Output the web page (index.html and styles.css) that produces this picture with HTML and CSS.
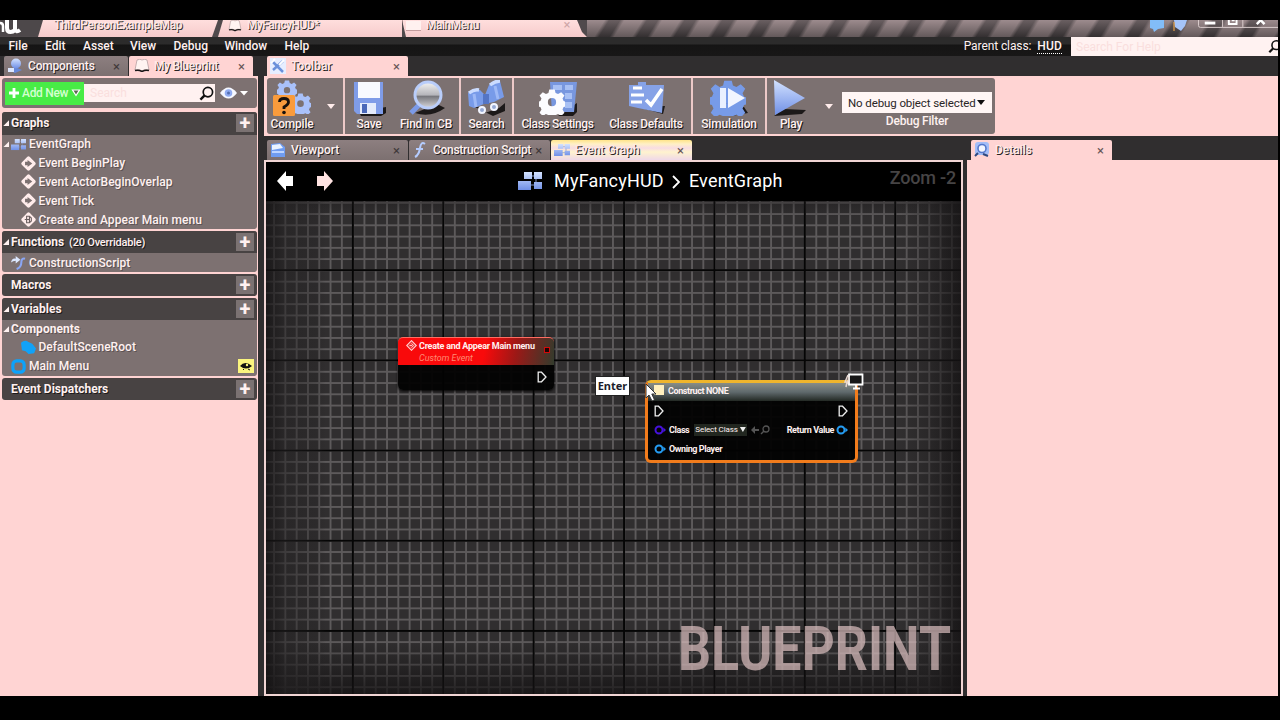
FILE: index.html
```html
<!DOCTYPE html>
<html lang="en">

<head>
  <meta charset="UTF-8" />
  <meta name="viewport" content="width=device-width, initial-scale=1.0" />
  <title>MyFancyHUD</title>
  <link rel="stylesheet" href="styles.css">
</head>

<body>
  <!-- shared icons -->
  <svg class="defs" width="0" height="0">
    <defs>
      <linearGradient id="blue" x1="0" y1="0" x2="0" y2="1">
        <stop offset="0" stop-color="#d3e2ff" />
        <stop offset="1" stop-color="#6f8fe6" />
      </linearGradient>
      <linearGradient id="glass" x1="0" y1="0" x2="0" y2="1">
        <stop offset="0" stop-color="#f4f4f4" />
        <stop offset=".5" stop-color="#b5b5ba" />
        <stop offset=".55" stop-color="#77777c" />
        <stop offset="1" stop-color="#d8d8dc" />
      </linearGradient>
      <symbol id="gear" viewBox="-12 -12 24 24">
        <path fill-rule="evenodd" d="M-2.5-11.5h5l.8 3.2 2.3 1 2.9-1.8 3 3-1.8 2.9 1 2.3 3.2.8v4l-3.2.8-1 2.3 1.8 2.9-3 3-2.9-1.8-2.3 1-.8 1.9h-5l-.8-1.9-2.3-1-2.9 1.8-3-3 1.8-2.9-1-2.3-3.2-.8v-4l3.2-.8 1-2.3-1.8-2.9 3-3 2.9 1.800 2.300-1zM0-3.600a3.800 3.800 0 1 0 0 7.600a3.800 3.800 0 1 0 0-7.600z" />
      </symbol>
      <symbol id="book" viewBox="0 0 16 14">
        <path d="M3 1q3-1.500 5 0q3-1.500 5 0l2 10q-4-1-6.500.5h-1Q5 10 1 11z" fill="#fff3f1" stroke="#a08c8e" stroke-width=".6" />
        <path d="M1 11.500q4-1 6.500.8h1q2.500-1.800 6.500-.8" fill="none" stroke="#191617" stroke-width="1.500" />
      </symbol>
      <symbol id="search" viewBox="0 0 16 16">
        <circle cx="9.500" cy="6.500" r="5" fill="none" stroke="#111" stroke-width="1.800" />
        <path d="M6 10L1.500 14.500" stroke="#111" stroke-width="2.600" />
      </symbol>
      <symbol id="event" viewBox="0 0 16 16">
        <path fill-rule="evenodd" fill="#ffeceb" d="M6.800.8Q8-.2 9.200.8l6 6q1 1.200 0 2.400l-6 6q-1.200 1-2.400 0l-6-6q-1-1.200 0-2.400zM7 4.200v2H4.300v3.600H7v2L12 8z" />
      </symbol>
      <symbol id="custom" viewBox="0 0 16 16">
        <path fill="#ffeceb" d="M6.800.8Q8-.2 9.200.8l6 6q1 1.200 0 2.400l-6 6q-1.200 1-2.400 0l-6-6q-1-1.200 0-2.400z" />
        <path d="M4 8h5M6 4.500h3l2 2v3l-2 2H6zM9 5v6" fill="none" stroke="#6b5f60" stroke-width="1.200" />
      </symbol>
      <symbol id="graph" viewBox="0 0 24 18">
        <path d="M12 4h6v9H9" fill="none" stroke="#7d8fc4" />
        <path fill="url(#blue)" d="M6 0h8v7H6zM16 0h8v7h-8zM0 9h13v9H0zM16 10h8v7h-8z" />
      </symbol>
      <symbol id="pin" viewBox="0 0 10 12">
        <path d="M1.200 1.200h3.300L9 6l-4.500 4.800H1.200z" fill="#050505" stroke="#eee" stroke-width="1.300" />
      </symbol>
      <symbol id="ring" viewBox="0 0 12 10">
        <circle cx="5" cy="5" r="3.500" fill="none" stroke="currentColor" stroke-width="2" />
        <path d="M9.300 2.500L12 5 9.300 7.500z" fill="currentColor" />
      </symbol>
    </defs>
  </svg>

  <div class="app">
    <header class="titlebar">
      <svg class="logo" viewBox="0 0 44 17">
        <path d="M0 0h44l-6 14q-2 2-5 2H0z" fill="#4d484a" />
        <path d="M0 3q3 0 3 3v6" fill="none" stroke="#fff" stroke-width="2.500" />
        <path d="M7 0v8q0 4 3.500 4 2.500 0 4.500-2M15 0v9q1 4 5 1" fill="none" stroke="#fff" stroke-width="4" />
      </svg>
      <div class="doc-tab first"><span>ThirdPersonExampleMap</span></div>
      <div class="doc-tab second"><svg class="doc-icon" viewBox="0 0 16 14"><use href="#book" /></svg><span>MyFancyHUD*</span></div>
      <div class="doc-tab third"><i class="sheet"></i><span>MainMenu</span><b class="close">×</b></div>
      <div class="stripes">
        <svg class="bubbles" viewBox="0 0 40 14">
          <path d="M1 0h14v8l-6 1-4 3-1-3-3-1z" fill="#82bdf8" />
          <path d="M25 0h13l-2 6-4 5-6-4z" fill="#a5c4fa" />
          <path d="M25 2v9" stroke="#ffb14b" />
        </svg>
        <svg class="window-buttons" viewBox="0 0 83 9">
          <path d="M.5-1v6.500q0 2 2 2H83M25.500-1v8M46.500-1v8" fill="none" stroke="#ddcfcf" />
          <path d="M7 3h11" stroke="#fff" stroke-width="3" />
          <path d="M32-2v6h8v-6M35 0h3" fill="none" stroke="#fff" stroke-width="2" />
          <path d="M61 4l4-4 4 4" fill="none" stroke="#fff" stroke-width="2.600" />
        </svg>
      </div>
    </header>

    <nav class="menubar">
      <span class="m-file">File</span><span class="m-edit">Edit</span><span class="m-asset">Asset</span><span class="m-view">View</span><span class="m-debug">Debug</span><span class="m-window">Window</span><span class="m-help">Help</span>
      <div class="parent-class">Parent class: <b>HUD</b></div>
      <div class="help-search"><span>Search For Help</span><svg viewBox="0 0 16 16"><use href="#search" /></svg></div>
    </nav>

    <div class="workspace">
      <aside class="sidebar">
        <div class="tabs">
          <div class="tab dim components-tab">
            <svg class="tab-icon" viewBox="0 0 16 16"><path d="M1 12l7-3 7 3-7 3z" fill="#6788d8" /><circle cx="9" cy="5.500" r="5" fill="url(#blue)" /><path d="M1 10h6v4H1z" fill="#dce7ff" /></svg>
            <span>Components</span><b class="close">×</b>
          </div>
          <div class="tab mybp-tab">
            <svg class="tab-icon" viewBox="0 0 16 14"><use href="#book" /></svg>
            <span class="ghost">My Blueprint</span><b class="close">×</b>
          </div>
        </div>
        <div class="side-panel">
          <div class="addbar">
            <button class="add-new"><svg viewBox="0 0 10 10"><path d="M5 0v10M0 5h10" stroke="#fff" stroke-width="2.800" /></svg><span>Add New</span><svg viewBox="0 0 10 8"><path d="M1.500 1h7L5 6.500z" fill="#5e6a55" stroke="#fff" stroke-width="1.200" /></svg></button>
            <div class="filter"><span>Search</span><svg viewBox="0 0 16 16"><use href="#search" /></svg></div>
            <svg class="eye" viewBox="0 0 28 12"><path d="M0 6q8.500-11 17 0q-8.500 11-17 0z" fill="#f6f8ff" /><circle cx="8.500" cy="6" r="3.800" fill="#91acf2" /><circle cx="8.500" cy="6" r="1.500" fill="#536eb0" /><path d="M20 4h8l-4 4.500z" fill="#fff" /></svg>
          </div>

          <section>
            <div class="section-head graphs"><i class="arrow"></i><b>Graphs</b><span class="plus">+</span></div>
            <div class="row l1 open"><i class="arrow"></i><svg class="graph-icon" viewBox="0 0 24 18"><use href="#graph" /></svg>EventGraph</div>
            <div class="row l2"><svg viewBox="0 0 16 16"><use href="#event" /></svg>Event BeginPlay</div>
            <div class="row l2"><svg viewBox="0 0 16 16"><use href="#event" /></svg>Event ActorBeginOverlap</div>
            <div class="row l2"><svg viewBox="0 0 16 16"><use href="#event" /></svg>Event Tick</div>
            <div class="row l2"><svg viewBox="0 0 16 16"><use href="#custom" /></svg>Create and Appear Main menu</div>
          </section>
          <section>
            <div class="section-head"><i class="arrow"></i><b>Functions</b><small>(20 Overridable)</small><span class="plus">+</span></div>
            <div class="row l1 script"><svg viewBox="0 0 16 16"><path d="M0 8Q1 3 5 4V1l5 4-5 4V6Q2 6 0 8z" fill="#dce8ff" /><path d="M15 4q-4-1-4 4t-5 7" fill="none" stroke="#8aa6f4" stroke-width="2.200" /></svg>ConstructionScript</div>
          </section>
          <section>
            <div class="section-head"><i class="arrow none"></i><b>Macros</b><span class="plus">+</span></div>
          </section>
          <section>
            <div class="section-head"><i class="arrow"></i><b>Variables</b><span class="plus">+</span></div>
            <div class="row heading"><i class="arrow"></i><b>Components</b></div>
            <div class="row l2"><svg viewBox="0 0 16 16"><path d="M0 3q4-4 8-1l4 2 4 5-2 5-6 1-3-3-4-1z" fill="#11a2f8" /></svg>DefaultSceneRoot</div>
            <div class="row l1"><svg viewBox="0 0 16 16"><rect x="2" y="2" width="12" height="12" rx="4" fill="none" stroke="#0ca2fb" stroke-width="3.400" /></svg>Main Menu<i class="visible"><svg viewBox="0 0 14 12"><path d="M1 6q5-6 12 0q-6 5-12 0z" fill="#111" /><circle cx="8" cy="5" r="1.200" fill="#f9f481" /><path d="M4 9l1 1M9 9l2 1" stroke="#111" /></svg></i></div>
          </section>
          <section>
            <div class="section-head"><i class="arrow none"></i><b>Event Dispatchers</b><span class="plus">+</span></div>
          </section>
        </div>
      </aside>

      <main class="content">
        <div class="tabs">
          <div class="tab toolbar-tab">
            <svg class="tab-icon" viewBox="0 0 16 16"><path d="M0 0h16v16H0z" fill="#e6eeff" /><path d="M2 3l11 11M13 3L3 12" stroke="#6b91db" stroke-width="2.500" /><path d="M1 5l4-4M9 7l5-5" stroke="#fff" stroke-width="2" /></svg>
            <span class="ghost">Toolbar</span><b class="close">×</b>
          </div>
        </div>
        <div class="toolbar">
          <div class="tools">
            <div class="tool compile">
              <svg viewBox="0 0 40 36"><g fill="#a9c1fa"><use href="#gear" x="5" y="0" width="20" height="20" /><use href="#gear" x="18" y="13" width="21" height="21" /></g><rect x="1" y="15" width="22" height="21" rx="1.500" fill="#f99b3c" /><path d="M7.500 22q0-3.500 4.500-3.500t4.500 3.500q0 2.500-4.500 5v2" fill="none" stroke="#18110c" stroke-width="2.800" /><circle cx="12" cy="32.500" r="1.800" fill="#18110c" /></svg>
              <span>Compile</span>
            </div>
            <div class="drop"></div>
            <div class="tool save">
              <svg viewBox="0 0 40 36"><path d="M10 32l27-5v6l-5 3H12z" fill="#1c1919" /><path d="M5 2h29v32H8l-3-3z" fill="#7f9ce8" /><path d="M9 2h22v16H9z" fill="#f8faff" /><path d="M11 23h16v11H11z" fill="#e4ebfb" /><path d="M13 24h5v9h-5z" fill="#4a68b8" /></svg>
              <span>Save</span>
            </div>
            <div class="tool find">
              <svg viewBox="0 0 40 36"><path d="M9 33q16 5 30-5l-8-4z" fill="#1c1919" /><path d="M14 24L5 33" stroke="#7b9ae8" stroke-width="5" /><circle cx="22" cy="15" r="13" fill="url(#glass)" stroke="#b9cdfa" stroke-width="3" /></svg>
              <span>Find in CB</span>
            </div>
            <div class="tool search">
              <svg viewBox="0 0 40 36"><path d="M8 27h10v6l14-5 6-5v8l-12 5z" fill="#1c1919" /><path d="M1 13q6-5 12-3l5 5 4-10q5-5 11-4l4 16-10 5-10 2-10 4-5-2z" fill="#789be9" /><path d="M2 13q5-4 10-3M23 5q5-4 10-4" stroke="#cbdcff" stroke-width="3.500" fill="none" /><path d="M7 14l2 13M28 6l3 13" stroke="#9eb9f6" stroke-width="3" /><path d="M16 14h6v10h-6z" fill="#5475c5" /><circle cx="15" cy="30" r="3" fill="#96a9d5" stroke="#f2f5ff" stroke-width="2" /><circle cx="27" cy="27" r="3" fill="#96a9d5" stroke="#f2f5ff" stroke-width="2" /></svg>
              <span>Search</span>
            </div>
            <div class="tool settings">
              <svg viewBox="0 0 40 36"><path d="M20 36l19-13v9l-4 4z" fill="#1c1919" /><path d="M12 2h27l-3 30H14z" fill="#7897df" /><path d="M15 5h9v5h-9zM27 5h8v5h-8zM27 13h7v6h-7zM27 22h7v6h-7z" fill="#a8c0f4" /><use href="#gear" x="1" y="9" width="26" height="26" fill="#fcfcff" /></svg>
              <span>Class Settings</span>
            </div>
            <div class="tool defaults">
              <svg viewBox="0 0 40 36"><path d="M12 27l25 7 2-8z" fill="#1c1919" /><path d="M3 5h9V2h8v3h18l-2 28-24-5-9-2z" fill="#86a2e7" /><path d="M7 8h9M5 15h13M5 22h11" stroke="#fff" stroke-width="3" /><path d="M20 20l5 5L36 9" fill="none" stroke="#fff" stroke-width="3.500" /></svg>
              <span>Class Defaults</span>
            </div>
            <div class="tool simulation">
              <svg viewBox="0 0 40 36"><path d="M8 32l27-5 4 6-22 4z" fill="#1c1919" /><use href="#gear" x="1" y="0" width="36" height="36" fill="#779be8" /><circle cx="19" cy="17" r="7" fill="#779be8" /><path d="M11 8h6v20h-6z" fill="#e9f0ff" /><path d="M19 8l17 10-17 10z" fill="#f1f5ff" /></svg>
              <span>Simulation</span>
            </div>
            <div class="tool play">
              <svg viewBox="0 0 40 36"><path d="M5 36l10-7 22 1-4 4z" fill="#1c1919" /><path d="M5 0l31 18L6 35z" fill="url(#blue)" /></svg>
              <span>Play</span>
            </div>
            <div class="drop play-drop"></div>
            <div class="debug">
              <div class="select">No debug object selected<i></i></div>
              <span>Debug Filter</span>
            </div>
          </div>
        </div>

        <div class="lower">
          <div class="editor">
            <div class="tabs editor-tabs">
              <div class="tab dim"><svg class="tab-icon" viewBox="0 0 16 16"><path d="M1 2l9-1 5 4v10H1z" fill="#6f9cf0" /><path d="M2 3l8-1 3 4-11 2z" fill="#eaf2ff" /><path d="M2 10h12" stroke="#bdd4ff" stroke-width="2" /></svg><span>Viewport</span><b class="close">×</b></div>
              <div class="tab dim cs"><svg class="tab-icon" viewBox="0 0 16 16"><path d="M13 2q-4-3-5 4t-5 9M4 7h7" fill="none" stroke="#b5ccff" stroke-width="2" /></svg><span>Construction Script</span><b class="close">×</b></div>
              <div class="tab active"><svg class="tab-icon" viewBox="0 0 24 18"><use href="#graph" /></svg><span class="ghost">Event Graph</span><b class="close">×</b></div>
            </div>
            <div class="graph">
              <div class="graph-head">
                <svg class="nav-arrow" viewBox="0 0 16 20"><path d="M0 10L9 0v5h7v10H9v5z" fill="#fff" /></svg>
                <svg class="nav-arrow next" viewBox="0 0 16 20"><path d="M16 10L7 0v5H0v10h7v5z" fill="#ffe3e2" /></svg>
                <svg class="crumb-icon" viewBox="0 0 24 18"><use href="#graph" /></svg>
                <span class="crumb">MyFancyHUD</span>
                <svg class="chevron" viewBox="0 0 8 14"><path d="M1 1l6 6-6 6" fill="none" stroke="#fff" stroke-width="1.800" /></svg>
                <span class="crumb">EventGraph</span>
                <span class="zoom">Zoom -2</span>
              </div>
              <div class="canvas">
                <svg class="watermark" viewBox="0 0 274 52"><text x="0" y="47" textLength="273" lengthAdjust="spacingAndGlyphs">BLUEPRINT</text></svg>

                <div class="node event-node">
                  <div class="node-head">
                    <svg class="node-icon" viewBox="0 0 16 16"><path d="M8 1l7 7-7 7-7-7z" fill="#e33" stroke="#ffd2d2" stroke-width="1.600" /><path d="M5 8h4M8 5l3 3-3 3" stroke="#ffd2d2" fill="none" stroke-width="1.300" /></svg>
                    <div><b>Create and Appear Main menu</b><em>Custom Event</em></div>
                    <i class="delegate"></i>
                  </div>
                  <div class="node-body"><svg class="pin" viewBox="0 0 10 12"><use href="#pin" /></svg></div>
                </div>

                <div class="tip">Enter</div>

                <div class="node construct-node">
                  <div class="node-head"><i class="square"></i><b>Construct NONE</b></div>
                  <div class="pin-row"><svg class="pin" viewBox="0 0 10 12"><use href="#pin" /></svg><svg class="pin right" viewBox="0 0 10 12"><use href="#pin" /></svg></div>
                  <div class="pin-row class-row">
                    <svg class="ring purple" viewBox="0 0 12 10"><use href="#ring" /></svg><b>Class</b>
                    <span class="class-select">Select Class<i></i></span>
                    <svg class="mini" viewBox="0 0 20 10"><path d="M0 5l4-4v3h4v2H4v3z" fill="#555" /><circle cx="15" cy="4" r="3" fill="none" stroke="#555" stroke-width="1.300" /><path d="M13 6l-3 3" stroke="#555" stroke-width="1.500" /></svg>
                    <b class="return">Return Value</b><svg class="ring" viewBox="0 0 12 10"><use href="#ring" /></svg>
                  </div>
                  <div class="pin-row"><svg class="ring" viewBox="0 0 12 10"><use href="#ring" /></svg><b>Owning Player</b></div>
                </div>
                <svg class="client-icon" viewBox="0 0 20 18"><path d="M5 1.500h13.500v10H5zM9 15.500h7M12 12v3" fill="#171717" stroke="#fff" stroke-width="1.800" /><path d="M4 2L1 9h2l-1 5M5 4L3 11" fill="none" stroke="#e6d6d0" stroke-width="1.500" /></svg>
                <svg class="cursor" viewBox="0 0 12 19"><path d="M1 1v14l3-3 3 6 2.500-1.200L6.800 11H11z" fill="#fff" stroke="#333" /></svg>
              </div>
            </div>
          </div>

          <div class="details">
            <div class="tabs">
              <div class="tab details-tab"><svg class="tab-icon" viewBox="0 0 16 16"><rect x="1" width="14" height="13" rx="3" fill="#a3bdf7" /><circle cx="8" cy="6.500" r="4" fill="#f3f6ff" stroke="#5578cb" stroke-width="1.600" /><path d="M4 11l-3 3M9 12l5 2" stroke="#30497f" stroke-width="2" /></svg><span class="ghost">Details</span><b class="close">×</b></div>
            </div>
            <div class="details-panel"></div>
          </div>
        </div>
      </main>
    </div>
  </div>
</body>

</html>
```
FILE: styles.css
```css
* {
  box-sizing: border-box;
}

body {
  margin: 0;
  background: #000;
  font-family: Roboto, "Liberation Sans", sans-serif;
  font-size: 12px;
  color: #fff1f0;
}

svg {
  display: block;
  flex: none;
}

.defs {
  position: absolute;
}

.app {
  display: flex;
  flex-direction: column;
  width: 1280px;
  height: 720px;
  padding: 20px 2px 24px 0;
  overflow: hidden;
}

/* title bar */
.titlebar {
  display: flex;
  height: 17px;
  overflow: hidden;
  background: #504a4c;
  line-height: 10px;
}

.logo {
  width: 44px;
  height: 17px;
  margin-right: -6px;
}

.doc-tab {
  display: flex;
  height: 17px;
  background: linear-gradient(#ffdedd, #f6cbcb);
  color: #ffe7e5;
  font-size: 12px;
  font-weight: 500;
  white-space: nowrap;
  text-shadow: 1px 1px 0 #3a3434;
}

.first {
  width: 180px;
  padding-left: 16px;
  clip-path: polygon(5px 0, 100% 0, 174px 100%, 0 100%);
  letter-spacing: -0.35px;
}

.second {
  width: 184px;
  padding-left: 9px;
  clip-path: polygon(5px 0, 100% 0, 100% 100%, 0 100%);
  letter-spacing: -0.5px;
}

.third {
  width: 185px;
  padding-left: 3px;
  border-left: 1px solid #caa4a5;
  clip-path: polygon(0 0, 175px 0, 180px 12px, 100% 100%, 4px 100%);
  letter-spacing: -0.5px;
}

.doc-icon {
  width: 16px;
  height: 12px;
  margin-right: 4px;
}

.sheet {
  width: 15px;
  height: 10px;
  margin: 1px 5px 0 0;
  background: #fff1ef;
  border-bottom: 1px solid #c49c9d;
}

.third .close {
  margin-right: 17px;
  color: #cfa7a8;
}

.stripes {
  display: flex;
  flex: 1;
  justify-content: flex-end;
  background: linear-gradient(rgba(255, 225, 228, .2), rgba(0, 0, 0, .25)), repeating-linear-gradient(122deg, #847678 0 15px, #453f41 19px 28px, #847678 32px);
}

.bubbles {
  width: 40px;
  height: 14px;
  margin-right: 9px;
}

.window-buttons {
  width: 80px;
  height: 9px;
}

/* menu */
.menubar {
  display: flex;
  align-items: center;
  height: 19px;
  padding-left: 8.5px;
  background: linear-gradient(#2c2b2b, #2c2b2b 7px, #151414 8px, #181717);
  font-weight: 500;
  line-height: 14px;
}

.menubar > span,
.parent-class {
  padding-bottom: 2px;
}

.m-file { width: 36.5px; }
.m-edit { width: 38px; }
.m-asset { width: 47px; }
.m-view { width: 43.5px; }
.m-debug { width: 51px; }
.m-window { width: 60px; }

.parent-class {
  margin-left: auto;
  margin-right: 9px;
  font-size: 12px;
  font-weight: 400;
  letter-spacing: -0.1px;
}

.parent-class b {
  margin-left: 3px;
  border-bottom: 1px dotted #fff;
  font-weight: 500;
  letter-spacing: .2px;
}

.help-search {
  display: flex;
  align-items: center;
  justify-content: space-between;
  width: 207px;
  height: 19px;
  padding-left: 5px;
  background: #fff2f1;
  color: #fadfde;
  font-weight: 400;
  overflow: hidden;
}

.help-search svg {
  width: 14px;
  height: 15px;
  margin-right: -4px;
}

/* docked tabs */
.workspace {
  display: flex;
  gap: 6px;
  height: 640px;
  background: #302e2f;
}

.sidebar {
  width: 258px;
}

.tabs {
  display: flex;
  gap: 1px;
  height: 20px;
  padding-left: 4px;
}

.tab {
  display: flex;
  align-items: center;
  height: 20px;
  padding: 0 8px 0 3px;
  background: #ffd4d3;
  border-radius: 2px 2px 0 0;
  font-weight: 500;
  white-space: nowrap;
  text-shadow: 1px 1px 0 #272323;
}

.dim {
  background: linear-gradient(#8d7f80, #7c7070);
}

.tab-icon {
  width: 16px;
  height: 16px;
  margin-right: 5px;
}

.close {
  margin-left: auto;
  color: #665657;
  font-weight: 400;
  font-size: 13px;
  text-shadow: none;
}

.dim .close {
  color: #40393a;
}

.ghost {
  color: #ffe9e7;
}

.components-tab,
.mybp-tab {
  width: 124px;
}

.components-tab span {
  letter-spacing: -0.2px;
}

.mybp-tab {
  padding-left: 5px;
}

.mybp-tab span {
  margin-left: -1px;
  letter-spacing: -0.3px;
}

/* sidebar */
.side-panel {
  height: 620px;
  padding: 2px 1px 0 2px;
  background: #ffd4d3;
}

.addbar {
  display: flex;
  align-items: center;
  height: 30px;
  margin-bottom: 3.5px;
  padding: 0 4px 0 3px;
  border-radius: 3px;
  background: #7d7171;
}

.add-new {
  display: flex;
  align-items: center;
  gap: 3px;
  width: 79px;
  height: 23px;
  padding: 0 4px;
  border: 0;
  background: #48ec46;
  color: #d4ffd0;
  font: 500 12px Roboto, "Liberation Sans", sans-serif;
  letter-spacing: -0.3px;
  white-space: nowrap;
}

.add-new svg {
  width: 10px;
  height: 10px;
}

.filter {
  display: flex;
  align-items: center;
  justify-content: space-between;
  width: 131px;
  height: 18px;
  padding: 0 1px 0 6px;
  background: #fff1f0;
  color: #fadfde;
}

.filter svg {
  width: 15px;
  height: 15px;
}

.eye {
  width: 28px;
  height: 12px;
  margin-left: 5px;
}

section {
  margin-bottom: 2px;
  border-radius: 3px;
  background: #7d7171;
  overflow: hidden;
}

.section-head {
  display: flex;
  align-items: center;
  height: 22px;
  padding: 0 3px 0 1px;
  background: #484343;
  font-size: 12px;
  text-shadow: 1px 1px 0 #1c1919;
}

.graphs {
  height: 23.5px;
}

.section-head small {
  margin: 2px 0 0 5px;
  font-size: 11px;
  font-weight: 500;
  letter-spacing: -0.2px;
}

.arrow {
  width: 6px;
  height: 6px;
  margin-right: 2px;
  background: #fff1f0;
  clip-path: polygon(100% 0, 100% 100%, 0 100%);
}

.none {
  visibility: hidden;
}

.plus {
  width: 18px;
  height: 18px;
  margin-left: auto;
  background: #7b7272;
  font-size: 20px;
  font-weight: 700;
  line-height: 18px;
  text-align: center;
  text-shadow: none;
}

.row {
  display: flex;
  align-items: center;
  height: 18.8px;
  font-size: 12px;
  font-weight: 500;
  letter-spacing: .03px;
  text-shadow: 1px 1px 0 #5c5253;
}

.row svg {
  width: 15px;
  height: 15px;
}

.l1 {
  padding-left: 9px;
}

.l1 > svg {
  margin-right: 3px;
}

.open {
  padding-left: 1px;
}

.l2 {
  padding-left: 18.5px;
}

.l2 > svg {
  margin-right: 3px;
}

.script {
  height: 19.5px;
}

.heading {
  height: 17.5px;
  padding-left: 1px;
}

.visible {
  width: 16px;
  height: 14px;
  margin: 0 3px 0 auto;
  padding: 1px;
  background: #faf47e;
}

.visible svg {
  width: 14px;
  height: 12px;
}

/* toolbar */
.content {
  width: 1014px;
}

.toolbar-tab {
  width: 141px;
}

.content > .tabs,
.editor-tabs {
  padding-left: 3px;
}

.toolbar {
  height: 60px;
  padding: 2px 3px;
  background: #ffd4d3;
}

.tools {
  display: flex;
  width: 728px;
  height: 56px;
  border-radius: 3px;
  background: #7c7171;
}

.tool {
  display: flex;
  flex-direction: column;
  align-items: center;
  padding-top: 2px;
  white-space: nowrap;
  font-weight: 500;
  letter-spacing: -0.2px;
  text-shadow: 1px 1px 0 #171414;
}

.tool svg {
  width: 40px;
  height: 36px;
}

.tool span {
  margin-top: 1px;
  line-height: 14px;
}

.compile { width: 50px; }
.save { width: 50px; border-left: 2px solid #ecc9c8; }
.find { width: 66px; }
.search { width: 53px; border-left: 2px solid #ecc9c8; }
.settings { width: 89px; border-left: 2px solid #ecc9c8; }
.defaults { width: 90px; letter-spacing: -0.3px; }
.simulation { width: 74px; border-left: 2px solid #ecc9c8; }
.play { width: 50px; border-left: 2px solid #ecc9c8; }

.settings {
  letter-spacing: -0.35px;
}

.play svg {
  margin-left: -5px;
}

.drop {
  width: 26px;
  padding: 26px 0 0 10px;
}

.play-drop {
  width: 27px;
}

.drop::before {
  content: "";
  display: block;
  width: 8px;
  height: 5px;
  background: #ffeceb;
  clip-path: polygon(0 0, 100% 0, 50% 100%);
}

.debug {
  padding-top: 14px;
  text-align: center;
  font-weight: 500;
  letter-spacing: -0.2px;
}

.select {
  display: flex;
  align-items: center;
  justify-content: space-between;
  width: 150px;
  height: 21px;
  padding: 0 7px 0 6px;
  background: #fff6f5;
  color: #2a2627;
  font-size: 11.5px;
  font-weight: 400;
  letter-spacing: -0.1px;
  white-space: nowrap;
}

.select i {
  width: 8px;
  height: 5px;
  background: #111;
  clip-path: polygon(0 0, 100% 0, 50% 100%);
}

.debug span {
  display: block;
  line-height: 16px;
}

/* graph editor */
.lower {
  display: flex;
  gap: 4px;
  padding-top: 4px;
}

.editor {
  width: 699px;
}

.editor .tab {
  width: 141px;
}

.editor .cs {
  letter-spacing: -0.3px;
}

.active {
  background: linear-gradient(#ffe48a, #fff0c6 4px, #f8dce2 8px, #fff3ce 12px, #efd8e8);
}

.graph {
  height: 536px;
  border: 2px solid #f1d5d4;
  background: #000;
}

.graph-head {
  display: flex;
  align-items: center;
  height: 39px;
  padding: 0 5px 2px 11px;
  font-size: 18px;
  color: #fff;
}

.crumb {
  letter-spacing: .2px;
}

.nav-arrow {
  width: 16px;
  height: 20px;
  margin-right: 24px;
}

.next {
  margin-right: 185px;
}

.crumb-icon {
  width: 24px;
  height: 18px;
  margin-right: 12px;
}

.chevron {
  width: 8px;
  height: 14px;
  margin: 2px 9px 0 8px;
}

.zoom {
  margin: -6px 0 0 auto;
  color: #464445;
  font-size: 18px;
  font-weight: 500;
  letter-spacing: -0.2px;
}

.canvas {
  position: relative;
  height: 493px;
  overflow: hidden;
  background-color: #302e2f;
  background-image:
    linear-gradient(90deg, rgba(20, 18, 19, .75), rgba(35, 33, 34, .55) 18px, rgba(35, 33, 34, .3) 50px, transparent 60px, transparent 635px, rgba(35, 33, 34, .4) 660px, rgba(20, 18, 19, .8)),
    linear-gradient(rgba(30, 28, 29, .45), transparent 16px, transparent 440px, rgba(20, 18, 19, .8)),
    linear-gradient(90deg, #050505 2px, transparent 2px),
    linear-gradient(#050505 2px, transparent 2px),
    linear-gradient(90deg, #5d5a5b 1.500px, transparent 1.500px),
    linear-gradient(#5d5a5b 1.500px, transparent 1.500px);
  background-size: auto, auto, 90.400px 90.200px, 90.400px 90.200px, 11.300px 11.275px, 11.300px 11.275px;
  background-position: 0 0, 0 0, -4.500px -22px, -4.500px -22px, -4.200px -21.700px, -4.200px -21.700px;
}

.watermark {
  position: absolute;
  left: 412px;
  top: 422px;
  width: 274px;
  height: 52px;
  font-size: 62px;
  font-weight: 700;
  fill: rgba(221, 192, 193, .7);
}

.node {
  position: absolute;
  background: rgba(2, 2, 2, .95);
  font-size: 9px;
  white-space: nowrap;
}

.node b {
  letter-spacing: -0.25px;
}

.event-node {
  left: 132px;
  top: 136px;
  width: 156px;
  height: 53px;
  border-radius: 5px;
  box-shadow: 0 1px 3px #000;
}

.event-node .node-head {
  display: flex;
  height: 28px;
  padding: 2px 4px 0 8px;
  border-radius: 5px 5px 0 0;
  border-top: 1px solid #ff6d62;
  background: linear-gradient(100deg, #f90a0b 55%, #9d1816 75%, #323c2d);
  line-height: 12px;
}

.node-icon {
  width: 11px;
  height: 11px;
  margin-right: 2px;
}

.event-node em {
  display: block;
  color: #ff8b72;
}

.delegate {
  width: 6px;
  height: 6px;
  margin: 7px 0 0 auto;
  background: #1b0505;
  border: 1px solid #d40909;
}

.pin {
  width: 10px;
  height: 12px;
}

.event-node .pin {
  margin: 6px 0 0 139px;
}

.tip {
  position: absolute;
  left: 329px;
  top: 175px;
  width: 35px;
  height: 20px;
  border: 1px solid #222;
  background: #fff;
  color: #1d1d2b;
  font: 700 11px/18px "Noto Sans", sans-serif;
  text-align: center;
}

.construct-node {
  left: 379px;
  top: 179px;
  width: 213px;
  height: 83px;
  border: 3px solid #f27c1c;
  border-top-color: #efb52c;
  border-radius: 6px;
}

.construct-node .node-head {
  display: flex;
  gap: 4px;
  height: 18px;
  padding: 2px 0 0 6px;
  background: linear-gradient(#888d86, #606a6d 50%, #232924);
  line-height: 12px;
}

.construct-node b {
  letter-spacing: -0.4px;
}

.square {
  width: 10px;
  height: 10px;
  background: #fff0bd;
}

.pin-row {
  display: flex;
  align-items: center;
  height: 19px;
  padding: 0 7px 0 6px;
}

.right {
  margin-left: auto;
}

.ring {
  width: 12px;
  height: 10px;
  color: #259cf2;
}

.ring + b {
  margin-left: 3px;
}

.purple {
  color: #4612dc;
}

.class-select {
  display: flex;
  align-items: center;
  gap: 2px;
  height: 12px;
  margin-left: 5px;
  padding: 0 1px;
  background: #222720;
  font-size: 8px;
  letter-spacing: -0.1px;
}

.class-select i {
  width: 6px;
  height: 5px;
  background: #eee;
  clip-path: polygon(0 0, 100% 0, 50% 100%);
}

.mini {
  width: 20px;
  height: 10px;
  margin-left: 4px;
}

.return {
  margin-left: auto;
  margin-right: 2px;
}

.client-icon {
  position: absolute;
  left: 578px;
  top: 172px;
  width: 20px;
  height: 18px;
}

.cursor {
  position: absolute;
  left: 379px;
  top: 182px;
  width: 12px;
  height: 19px;
}

/* details */
.details {
  width: 311px;
}

.details-tab {
  width: 141px;
}

.details-panel {
  height: 536px;
  background: #ffd4d3;
}
```
